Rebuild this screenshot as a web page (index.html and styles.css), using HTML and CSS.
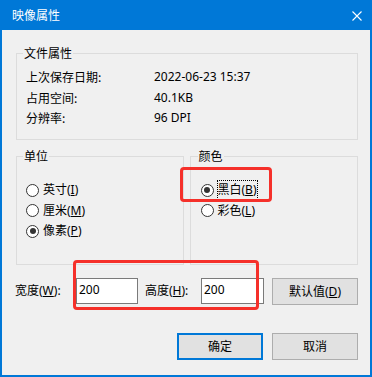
FILE: index.html
```html
<!DOCTYPE html>
<html lang="zh-CN">
<head>
<meta charset="utf-8">
<title>映像属性</title>
<link rel="stylesheet" href="styles.css">
</head>
<body>
<div class="window">
  <div class="titlebar">
    <span class="title">映像属性</span>
    <svg class="close" width="10" height="10" viewBox="0 0 10 10"><path d="M0.5 0.5 L9.5 9.5 M9.5 0.5 L0.5 9.5" stroke="#fff" stroke-width="1.1" fill="none"/></svg>
  </div>
  <div class="client">
    <fieldset class="group file">
      <legend>文件属性</legend>
      <div class="row"><span class="key">上次保存日期:</span><span>2022-06-23 15:37</span></div>
      <div class="row"><span class="key">占用空间:</span><span>40.1KB</span></div>
      <div class="row"><span class="key">分辨率:</span><span>96 DPI</span></div>
    </fieldset>
    <div class="groups">
      <fieldset class="group unit">
        <legend>单位</legend>
        <div class="radio"><span class="dot"></span><span>英寸(<u>I</u>)</span></div>
        <div class="radio"><span class="dot"></span><span>厘米(<u>M</u>)</span></div>
        <div class="radio"><span class="dot on"></span><span>像素(<u>P</u>)</span></div>
      </fieldset>
      <fieldset class="group color">
        <legend>颜色</legend>
        <div class="radio"><span class="dot on"></span><span class="focus">黑白(<u>B</u>)</span></div>
        <div class="radio"><span class="dot"></span><span>彩色(<u>L</u>)</span></div>
      </fieldset>
    </div>
    <div class="sizes">
      <span class="lbl lbl-w">宽度(<u>W</u>):</span>
      <div class="input in-w">200</div>
      <span class="lbl lbl-h">高度(<u>H</u>):</span>
      <div class="input in-h">200</div>
      <div class="btn btn-def">默认值(<u>D</u>)</div>
    </div>
    <div class="actions">
      <div class="btn primary">确定</div>
      <div class="btn">取消</div>
    </div>
    <div class="mark mark-a"></div>
    <div class="mark mark-b"></div>
  </div>
</div>
</body>
</html>
```
FILE: styles.css
```css
* { box-sizing: border-box; }
html, body { margin: 0; padding: 0; }
body {
  width: 372px;
  height: 377px;
  overflow: hidden;
  background: #f0f0f0;
  font-family: "Noto Sans", "Noto Sans CJK SC", sans-serif;
  font-size: 12px;
  color: #000;
}
.window {
  width: 372px;
  height: 377px;
  display: flex;
  flex-direction: column;
}
.titlebar {
  height: 30px;
  background: #0078d7;
  display: flex;
  align-items: center;
  justify-content: space-between;
  padding: 0 10px 0 12px;
  flex: none;
}
.title {
  color: #fff;
  font-size: 12px;
  line-height: 14px;
  font-family: "Noto Sans CJK SC", sans-serif;
}
.close { display: block; margin-top: 1px; }
.client {
  position: relative;
  flex: 1;
  border: 2px solid #0078d7;
  border-top: 0;
  background: #f0f0f0;
  padding: 16px 12px 0 14px;
}
.group {
  margin: 0;
  min-width: 0;
  border: 1px solid #dcdcdc;
  padding: 7px 9px 10.5px 9px;
}
.group legend {
  padding: 0 1px;
  margin-left: -3px;
  line-height: 14px;
  font-family: "Noto Sans CJK SC", sans-serif;
}
.row {
  height: 20.5px;
  display: flex;
  align-items: center;
  line-height: 14px;
}
.key { width: 128px; flex: none; font-family: "Noto Sans CJK SC", sans-serif; }
.groups {
  margin-top: 9px;
  display: flex;
  gap: 6px;
}
.groups .group {
  flex: 1;
  padding: 16.75px 9px 22.75px 9px;
}
.groups .color { padding-left: 10px; }
.radio {
  height: 20.5px;
  display: flex;
  align-items: center;
  gap: 4px;
  line-height: 14px;
}
.dot {
  width: 13px;
  height: 13px;
  border: 1px solid #333;
  border-radius: 50%;
  background: #fff;
  display: flex;
  align-items: center;
  justify-content: center;
  flex: none;
}
.dot.on::after {
  content: "";
  width: 6px;
  height: 6px;
  border-radius: 50%;
  background: #333;
}
.focus {
  outline: 1px dotted #000;
  outline-offset: 0;
  padding: 2px 0;
}
.sizes {
  margin-top: 12px;
  height: 28px;
  display: flex;
  align-items: center;
  margin-left: -1px;
}
.lbl { flex: none; line-height: 14px; }
.lbl-w { width: 61px; }
.lbl-h { width: 56px; margin-left: 7px; }
.input {
  height: 26px;
  border: 1px solid #7a7a7a;
  background: #fff;
  padding: 0 0 3px 2px;
  display: flex;
  align-items: center;
  flex: none;
}
.in-w { width: 62px; margin-top: -1px; }
.in-h { width: 63px; margin-top: -1px; }
.btn {
  width: 86px;
  height: 27px;
  border: 1px solid #adadad;
  background: #e1e1e1;
  display: flex;
  align-items: center;
  justify-content: center;
  line-height: 14px;
  flex: none;
}
.btn-def { margin-left: 8px; margin-top: 1px; }
.actions {
  margin-top: 28px;
  display: flex;
  justify-content: flex-end;
  gap: 9px;
}
.btn.primary { border: 2px solid #0078d7; }
.mark {
  position: absolute;
  border: 3px solid #f5302a;
  border-radius: 4px;
}
.mark-a { left: 178px; top: 137px; width: 92px; height: 35px; }
.mark-b { left: 71px; top: 230px; width: 186px; height: 50px; }
```
